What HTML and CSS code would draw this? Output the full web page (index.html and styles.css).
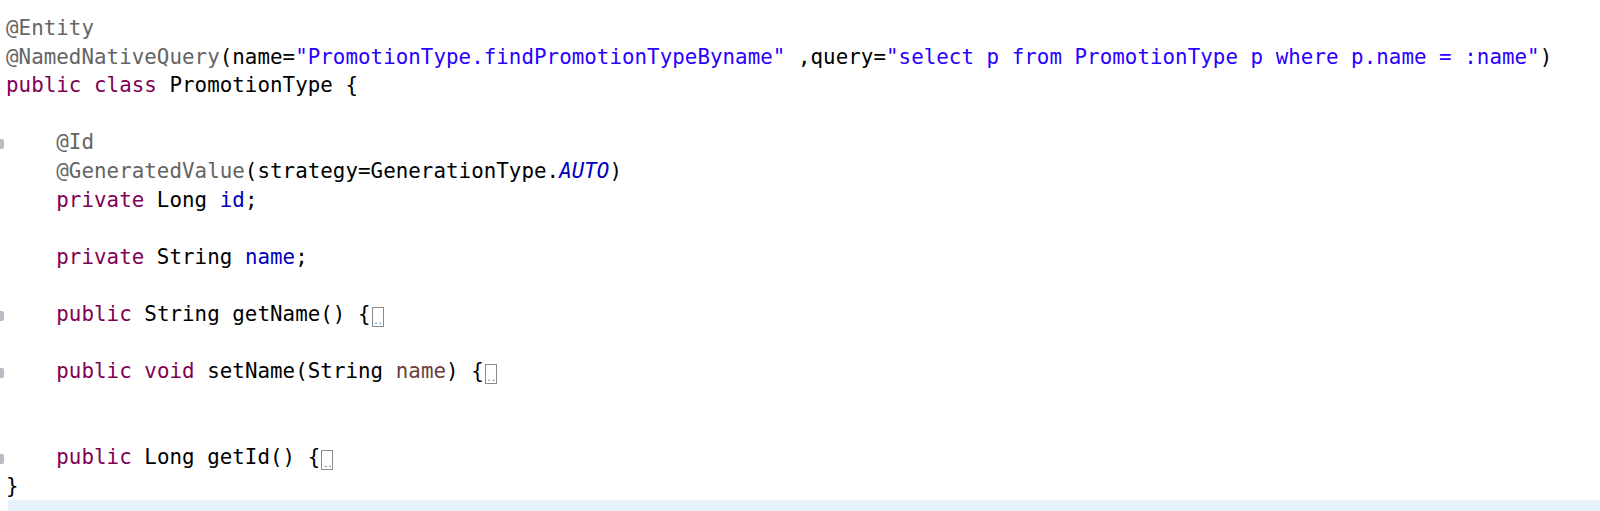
FILE: index.html
```html
<!DOCTYPE html>
<html>
<head>
<meta charset="utf-8">
<link rel="stylesheet" href="styles.css">
</head>
<body>
<div class="editor">
  <div class="line"><span class="gutter"></span><span class="code"><span class="ann">@Entity</span></span></div>
  <div class="line"><span class="gutter"></span><span class="code"><span class="ann">@NamedNativeQuery</span>(name=<span class="str">"PromotionType.findPromotionTypeByname"</span> ,query=<span class="str">"select p from PromotionType p where p.name = :name"</span>)</span></div>
  <div class="line"><span class="gutter"></span><span class="code"><span class="kw">public</span> <span class="kw">class</span> PromotionType {</span></div>
  <div class="line"><span class="gutter"></span><span class="code"> </span></div>
  <div class="line"><span class="gutter"><span class="mark"></span></span><span class="code">    <span class="ann">@Id</span></span></div>
  <div class="line"><span class="gutter"></span><span class="code">    <span class="ann">@GeneratedValue</span>(strategy=GenerationType.<span class="const">AUTO</span>)</span></div>
  <div class="line"><span class="gutter"></span><span class="code">    <span class="kw">private</span> Long <span class="field">id</span>;</span></div>
  <div class="line"><span class="gutter"></span><span class="code"> </span></div>
  <div class="line"><span class="gutter"></span><span class="code">    <span class="kw">private</span> String <span class="field">name</span>;</span></div>
  <div class="line"><span class="gutter"></span><span class="code"> </span></div>
  <div class="line"><span class="gutter"><span class="mark"></span></span><span class="code">    <span class="kw">public</span> String getName() {<span class="fold">..</span></span></div>
  <div class="line"><span class="gutter"></span><span class="code"> </span></div>
  <div class="line"><span class="gutter"><span class="mark"></span></span><span class="code">    <span class="kw">public</span> <span class="kw">void</span> setName(String <span class="param">name</span>) {<span class="fold">..</span></span></div>
  <div class="line"><span class="gutter"></span><span class="code"> </span></div>
  <div class="line"><span class="gutter"></span><span class="code"> </span></div>
  <div class="line"><span class="gutter"><span class="mark"></span></span><span class="code">    <span class="kw">public</span> Long getId() {<span class="fold">..</span></span></div>
  <div class="line"><span class="gutter"></span><span class="code">}</span></div>
  <div class="line current"><span class="gutter"></span><span class="code"> </span></div>
</div>
</body>
</html>
```

FILE: styles.css
```css
html, body {
  margin: 0;
  padding: 0;
  background: #ffffff;
}

body {
  width: 1600px;
  height: 511px;
  overflow: hidden;
}

.editor {
  padding-top: 14px;
  font-family: "DejaVu Sans Mono", "Liberation Mono", monospace;
  font-size: 20.8px;
  letter-spacing: 0.05px;
  line-height: 28.6px;
  color: #000000;
}

.line {
  display: flex;
  height: 28.6px;
  white-space: pre;
}

.gutter {
  flex: none;
  width: 6px;
  display: flex;
  align-items: flex-start;
}

.mark {
  display: block;
  width: 4px;
  height: 10px;
  margin-top: 11px;
  background: #b9bdc3;
  border-radius: 0 2px 2px 0;
}

.code {
  flex: 1;
}

.line.current .code {
  background: #e8f2fd;
  margin-left: 2px;
}

.ann { color: #646464; }
.kw { color: #7f0055; }
.str { color: #2a00ff; }
.field { color: #0000c0; }
.const { color: #0000c0; font-style: italic; }
.param { color: #6a3e3e; }

.fold {
  display: inline-block;
  overflow: hidden;
  box-sizing: content-box;
  width: 10px;
  height: 9px;
  padding-top: 9px;
  margin-left: 1px;
  border: 1.5px solid #8c8c8c;
  vertical-align: -6px;
  font-size: 9px;
  line-height: 8px;
  text-align: center;
  letter-spacing: -1px;
  color: #666666;
}
```
